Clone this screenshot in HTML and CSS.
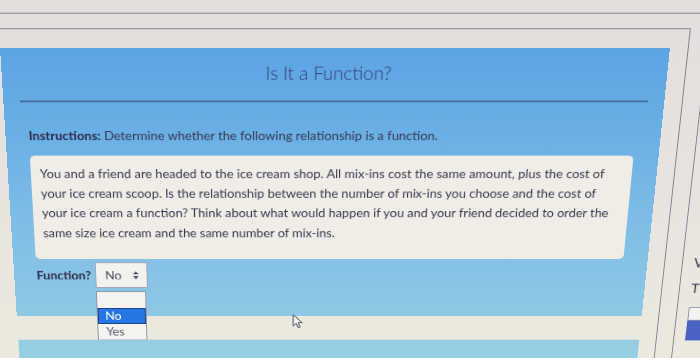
FILE: index.html
```html
<!DOCTYPE html>
<html lang="en">
  <head>
    <meta charset="UTF-8" />
    <meta name="viewport" content="width=device-width, initial-scale=1.0">
    <title>Is It a Function?</title>
    <link rel="stylesheet" href="styles.css">
  </head>
  <body>
    <div class="screen">
      <div class="outer">
        <div class="frame">
          <section class="panel">
            <h1 class="title">Is It a Function?</h1>
            <hr class="rule">
            <div class="content">
              <p class="instructions"><b>Instructions:</b> Determine whether the following relationship is a function.</p>
              <div class="prompt">You and a friend are headed to the ice cream shop. All mix-ins cost the same amount, plus the cost of your ice cream scoop. Is the relationship between the number of mix-ins you choose and the cost of your ice cream a function? Think about what would happen if you and your friend decided to order the same size ice cream and the same number of mix-ins.</div>
              <div class="answer">
                <span class="label">Function?</span>
                <div class="select">
                  <span>No</span>
                  <svg class="arrows" width="7" height="10" viewBox="0 0 7 10"><path d="M3.5 0.5 L6.5 4 L0.5 4 Z M0.5 6 L6.5 6 L3.5 9.5 Z" fill="#4d4d5e"/></svg>
                  <ul class="options">
                    <li></li>
                    <li class="active">No</li>
                    <li>Yes</li>
                  </ul>
                </div>
              </div>
            </div>
            <svg class="cursor" width="12" height="18" viewBox="0 0 12 18"><path d="M1 1 L1 14.5 L4.2 11.4 L6.6 16.8 L8.6 15.9 L6.3 10.6 L10.6 10.6 Z" fill="#f6f6f2" stroke="#3a3a44" stroke-width="1" stroke-linejoin="round"/></svg>
          </section>
          <section class="panel panel-next"></section>
        </div>
      </div>
      <div class="aside">
        <span>V</span>
        <span>T</span>
        <div class="aside-box"></div>
        <div class="aside-fill"></div>
      </div>
    </div>
  </body>
</html>
```

FILE: styles.css
```css
html {
  overflow: hidden;
}
body {
  margin: 0;
  height: 358px;
  background: linear-gradient(180deg, #e3dedd 0%, #e7e4df 55%, #ebeadd 100%);
  font-family: Lato, "Open Sans", sans-serif;
  color: #393850;
}

/* the photo is taken at an angle, so the whole screen leans back */
.screen {
  display: flex;
  align-items: flex-start;
  width: 700px;
  transform-origin: 250px 0;
  transform: perspective(800px) rotateX(-11.2deg);
}

.outer {
  flex: none;
  box-sizing: border-box;
  width: 753px;
  height: 420px;
  margin: 13px 0 0 -40px;
  padding: 15px 18px 0 40px;
  border-top: 1px solid #86808c;
  border-right: 1px solid #86808c;
}
.frame {
  box-sizing: border-box;
  height: 406px;
  margin-left: -40px;
  padding: 20px 18px 0 40px;
  border-top: 1px solid #86808c;
  border-right: 1px solid #86808c;
}

.panel {
  position: relative;
  margin-left: -3px;
  background: linear-gradient(180deg, #5ba5e2 0%, #6aafe5 30%, #7fbee6 65%, #8fc8e4 100%);
}
.panel-next {
  height: 60px;
  margin-top: 28px;
  background: #95cde2;
}

.title {
  margin: 0;
  padding: 12px 12px 0 0;
  font-size: 19px;
  line-height: 28px;
  font-weight: 300;
  text-align: center;
  color: #34377c;
}
.rule {
  height: 0;
  margin: 15px 17px 0;
  border: 0;
  border-top: 2px solid #4a6d9c;
}

.content {
  padding: 0 26px 34px 24px;
  font-size: 13.4px;
}
.instructions {
  margin: 26px 0 0;
  line-height: 20px;
}
.instructions b {
  color: #2c2a4a;
}
.prompt {
  margin-top: 12px;
  padding: 9px 10px 19px 9.5px;
  line-height: 22.2px;
  background: #efede6;
  border-radius: 5px;
}

.answer {
  display: flex;
  align-items: center;
  gap: 5px;
  margin-top: 4px;
}
.label {
  font-weight: 700;
  color: #2c2a4a;
}
.select {
  position: relative;
  box-sizing: border-box;
  display: flex;
  align-items: center;
  justify-content: space-between;
  width: 56px;
  height: 30px;
  padding: 0 8px 0 9px;
  background: #f3f2ee;
  border: 1px solid #a3a5b6;
  border-radius: 2px;
  color: #4d4c5f;
  font-size: 13.5px;
}
.options {
  position: absolute;
  top: calc(100% + 5px);
  left: -1px;
  box-sizing: border-box;
  width: 54px;
  margin: 0;
  padding: 0;
  list-style: none;
  background: #f4f3ef;
  border: 1px solid #8f91a5;
}
.options li {
  box-sizing: border-box;
  height: 19px;
  padding-left: 8px;
  line-height: 19px;
  color: #55546a;
}
.options li.active {
  background: #2576e3;
  border: 1.5px solid #1d3f86;
  line-height: 16px;
  padding-left: 6.5px;
  color: #fff;
}

.cursor {
  position: absolute;
  left: 299px;
  top: 297px;
}

.aside {
  flex: none;
  margin: 271px 0 0 12px;
  width: 40px;
  font-size: 15px;
  line-height: 30px;
  color: #3b3a4f;
}
.aside span {
  display: block;
}
.aside-box {
  height: 14px;
  margin-top: 8px;
  background: #f4f3ef;
  border: 1px solid #8f91a5;
}
.aside-fill {
  height: 24px;
  background: #4b63c4;
}
```
